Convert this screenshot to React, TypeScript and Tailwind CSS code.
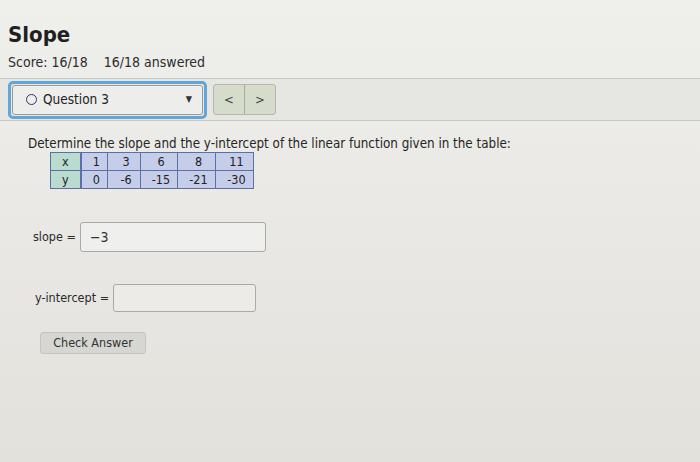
export default function App() {
  const xs = ["1", "3", "6", "8", "11"];
  const ys = ["0", "-6", "-15", "-21", "-30"];
  const widths = ["w-[27px]", "w-[33px]", "w-[37px]", "w-[38px]", "w-[38px]"];

  return (
    <div
      className="h-[462px] w-[700px] overflow-hidden bg-gradient-to-b from-[#efefec] via-[#e9e8e4] to-[#e3e1dc] text-[#2a2a2a]"
      style={{ fontFamily: '"DejaVu Sans Condensed", "DejaVu Sans", sans-serif' }}
    >
      <div className="px-[8px] pt-[22px]">
        <h1 className="text-[22px] font-bold leading-[26px] text-[#1f1f1f]">Slope</h1>
        <div className="mt-[6px] flex gap-[16px] text-[14px] leading-[16px] text-[#2c2c2c]">
          <span>Score: 16/18</span>
          <span>16/18 answered</span>
        </div>
      </div>

      <div className="mt-[8px] flex h-[43px] items-center gap-[6px] border-y border-[#c9c8c4] bg-[#e6e6e2] px-[8px]">
        <div className="flex h-[38px] w-[199px] items-center rounded-[5px] border-[3px] border-[#62a6d8] p-[1px]">
          <div className="flex h-full w-full items-center rounded-[3px] border border-[#9a9a98] bg-[#ededeb] pl-[13px] pr-[10px]">
            <span className="mr-[6px] inline-block h-[11px] w-[11px] rounded-full border-[1.5px] border-[#3b2f6e]" />
            <span className="text-[13.5px] text-[#222]">Question 3</span>
            <span className="ml-auto text-[9px] text-[#333]">▼</span>
          </div>
        </div>
        <div className="flex h-[31px] overflow-hidden rounded-[3px] border border-[#b4b8ac] bg-[#d6dccc]">
          <div className="flex w-[31px] items-center justify-center border-r border-[#a8ac9f] text-[13px] text-[#444]">&lt;</div>
          <div className="flex w-[30px] items-center justify-center text-[13px] text-[#444]">&gt;</div>
        </div>
      </div>

      <div className="pl-[28px] pt-[15px]">
        <p className="text-[13.3px] leading-[16px] text-[#262626]">
          Determine the slope and the y-intercept of the linear function given in the table:
        </p>
        <table className="ml-[22px] border-collapse text-[12.5px] leading-[17px] text-[#222]">
          <tbody>
            <tr>
              <td className="w-[30px] border border-[#5b6fa8] border-r-2 bg-[#b9dccf] text-center">x</td>
              {xs.map((v, i) => (
                <td key={i} className={`${widths[i]} border border-[#5b6fa8] bg-[#c5cde9] pl-[4px] text-center`}>{v}</td>
              ))}
            </tr>
            <tr>
              <td className="border border-[#5b6fa8] border-r-2 bg-[#b9dccf] text-center">y</td>
              {ys.map((v, i) => (
                <td key={i} className="border border-[#5b6fa8] bg-[#c5cde9] pl-[4px] text-center">{v}</td>
              ))}
            </tr>
          </tbody>
        </table>
      </div>

      <div className="mt-[33px] flex items-center pl-[33px]">
        <span className="text-[12.5px] text-[#2a2a2a]">slope =</span>
        <div className="ml-[4px] flex h-[30px] w-[186px] items-center rounded-[3px] border border-[#a9a9a6] bg-[#efefed] pl-[9px] text-[14px] text-[#333]">
          −3
        </div>
      </div>

      <div className="mt-[32px] flex items-center pl-[35px]">
        <span className="text-[12.5px] text-[#2a2a2a]">y-intercept =</span>
        <div className="ml-[4px] h-[28px] w-[143px] rounded-[3px] border border-[#a9a9a6] bg-[#ecebe8]" />
      </div>

      <div className="mt-[18px] pl-[40px]">
        <button className="h-[22px] w-[106px] rounded-[3px] border border-[#c4c4c0] bg-[#d6d6d2] text-[12.5px] text-[#333]">
          Check Answer
        </button>
      </div>
    </div>
  );
}
